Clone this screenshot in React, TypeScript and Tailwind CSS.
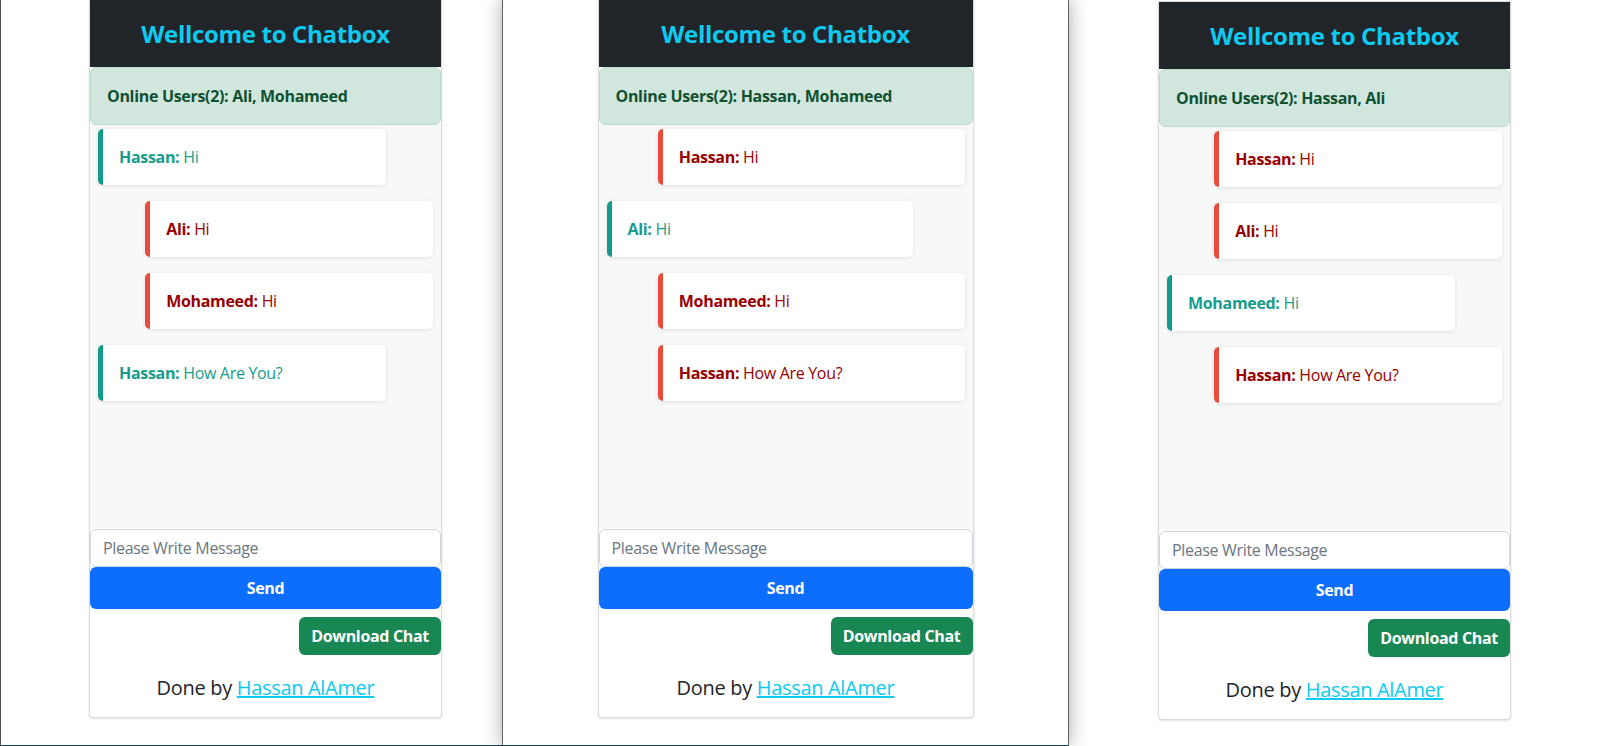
import React from "react";

type Msg = { user: string; text: string };

const MESSAGES: Msg[] = [
  { user: "Hassan", text: "Hi" },
  { user: "Ali", text: "Hi" },
  { user: "Mohameed", text: "Hi" },
  { user: "Hassan", text: "How Are You?" },
];

const USERS = ["Hassan", "Ali", "Mohameed"];

// one chat bubble, own messages sit left in teal, the others right in red
const Bubble = ({ msg, own }: { msg: Msg; own: boolean }) => (
  <div
    className={
      own
        ? "mb-4 ml-2 mr-auto w-[82%] rounded-[5px] border-l-[5px] border-[#139a8a] bg-white p-4 text-base leading-6 text-[#169c8c] shadow-[0_1px_4px_rgba(0,0,0,0.1)]"
        : "mb-4 ml-auto mr-2 w-[82%] rounded-[5px] border-l-[5px] border-[#e74c3c] bg-white p-4 text-base leading-6 text-[#990000] shadow-[0_1px_4px_rgba(0,0,0,0.1)]"
    }
  >
    <span className="font-bold">{msg.user}:</span> {msg.text}
  </div>
);

interface ChatBoxProps {
  me: string;
  cardClass: string;
}

const ChatBox: React.FC<ChatBoxProps> = ({ me, cardClass }) => {
  const online = USERS.filter((u) => u !== me);
  return (
    <div className={cardClass}>
      {/* Header */}
      <div className="flex h-[67px] items-center justify-center bg-[#212529]">
        <h3 className="text-[24px] font-bold leading-[29px] text-[#0dcaf0]">
          Wellcome to Chatbox
        </h3>
      </div>

      {/* Online users */}
      <div className="h-[58px] rounded-[6px] border border-[#badbcc] bg-[#d1e7dd] px-4 py-4 text-base font-bold leading-6 text-[#0f5132]">
        Online Users({online.length}): {online.join(", ")}
      </div>

      {/* Messages */}
      <div className="flex h-[404px] flex-col overflow-hidden bg-[#f8f8f8] pt-1">
        {MESSAGES.map((m, i) => (
          <Bubble key={i} msg={m} own={m.user === me} />
        ))}
      </div>

      {/* Input + actions */}
      <input
        readOnly
        placeholder="Please Write Message"
        className="mt-px h-[38px] w-full rounded-[6px] border border-[#ced4da] bg-white px-3 text-base text-[#212529] outline-none placeholder:text-[#6c757d]"
      />
      <button className="h-[42px] w-full rounded-[6px] bg-[#0d6efd] text-base font-bold text-white">
        Send
      </button>
      <div className="flex justify-end pt-2">
        <button className="h-[38px] rounded-[6px] bg-[#198754] px-3 text-base font-bold text-white">
          Download Chat
        </button>
      </div>

      {/* Footer */}
      <div className="pb-[14px] pt-[18px] text-center text-[20px] leading-[30px] text-[#212529]">
        Done by{" "}
        <a href="#" className="text-[#0dcaf0] underline">
          Hassan AlAmer
        </a>
      </div>
    </div>
  );
};

export default function App() {
  return (
    <div className="relative h-[746px] w-[1600px] overflow-hidden bg-white tracking-[-0.02em] [font-family:'Open_Sans',sans-serif]">
      {/* left window */}
      <div className="absolute left-0 top-0 flex h-[746px] w-[530px] justify-center border-b border-l border-b-[#1e4756] border-l-[#4d4d4d] bg-white">
        <ChatBox
          me="Hassan"
          cardClass="mt-[-1px] flex h-[719px] w-[353px] flex-col rounded-b-[4px] border border-[#dcdcdc] bg-white shadow-sm"
        />
      </div>

      {/* right window */}
      <div className="absolute left-[1069px] top-0 flex h-[746px] w-[531px] justify-center bg-white">
        <ChatBox
          me="Mohameed"
          cardClass="mt-[1px] flex h-[719px] w-[353px] flex-col rounded-b-[4px] border border-[#dcdcdc] bg-white shadow-sm"
        />
      </div>

      {/* middle window, on top */}
      <div className="absolute left-[502px] top-0 z-10 flex h-[746px] w-[567px] justify-center border-x border-b border-b-[#1e4756] border-x-[#5f5f5f] bg-white shadow-[0_0_18px_rgba(0,0,0,0.35)]">
        <ChatBox
          me="Ali"
          cardClass="mt-[-1px] flex h-[719px] w-[376px] flex-col rounded-b-[4px] border border-[#dcdcdc] bg-white shadow-sm"
        />
      </div>
    </div>
  );
}
